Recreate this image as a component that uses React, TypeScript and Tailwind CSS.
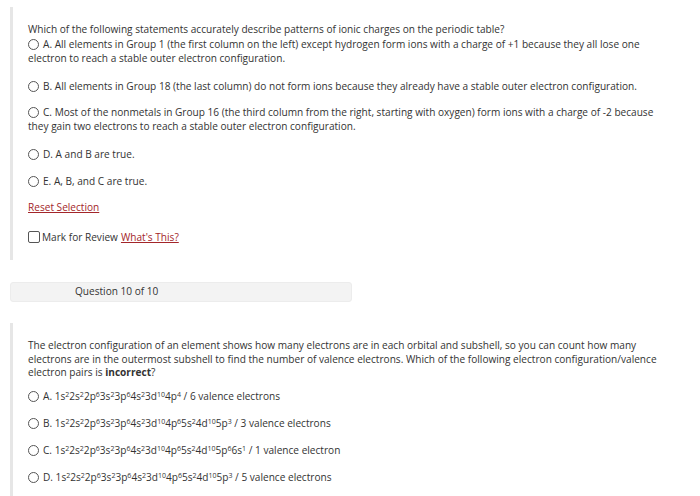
import React from "react";

const Radio = () => (
  <span className="inline-block w-[11px] h-[11px] rounded-full border border-[#555] mr-[4px] align-[-2px] bg-white shrink-0" />
);

const Opt = ({ children, className = "" }: { children: React.ReactNode; className?: string }) => (
  <div className={"leading-[14px] " + className}>
    <Radio />
    {children}
  </div>
);

const S = ({ c }: { c: string }) => <sup className="text-[7px] leading-none relative top-[-3px]">{c}</sup>;

const Config = ({ parts }: { parts: [string, string][] }) => (
  <>
    {parts.map(([b, s], i) => (
      <React.Fragment key={i}>
        {b}
        <S c={s} />
      </React.Fragment>
    ))}
  </>
);

const base: [string, string][] = [
  ["1s", "2"],
  ["2s", "2"],
  ["2p", "6"],
  ["3s", "2"],
  ["3p", "6"],
  ["4s", "2"],
  ["3d", "10"],
];

export default function App() {
  return (
    <div
      className="w-[700px] h-[496px] bg-white overflow-hidden pl-[10px] text-[#333] text-[10.1px]"
      style={{ fontFamily: '"Open Sans", "Liberation Sans", sans-serif' }}
    >
      <div className="mt-[7px] h-[253px] border-l-[3px] border-[#e6e6e6] pl-[15px] pt-[15px]">
        <div className="leading-[14px] w-[630px]">
          Which of the following statements accurately describe patterns of ionic charges on the periodic table?
        </div>
        <Opt className="w-[630px] mt-[1px]">
          A. All elements in Group 1 (the first column on the left) except hydrogen form ions with a charge of +1 because they all lose one electron to reach a stable outer electron configuration.
        </Opt>
        <Opt className="mt-[14px]">
          B. All elements in Group 18 (the last column) do not form ions because they already have a stable outer electron configuration.
        </Opt>
        <Opt className="mt-[12px] w-[640px]">
          C. Most of the nonmetals in Group 16 (the third column from the right, starting with oxygen) form ions with a charge of -2 because they gain two electrons to reach a stable outer electron configuration.
        </Opt>
        <Opt className="mt-[14px]">D. A and B are true.</Opt>
        <Opt className="mt-[13px]">E. A, B, and C are true.</Opt>
        <div className="mt-[12px] leading-[14px]">
          <span className="text-[#a3262a] underline">Reset Selection</span>
        </div>
        <div className="mt-[16px] leading-[14px] flex items-center">
          <span className="inline-block w-[12px] h-[12px] rounded-[2px] border border-[#555] mr-[2px]" />
          <span>Mark for Review</span>
          <span className="text-[#a3262a] underline ml-[3px]">What's This?</span>
        </div>
      </div>

      <div className="mt-[22px] w-[342px] h-[20px] bg-[#f3f3f3] border border-[#ececec] rounded-[3px] flex items-center pl-[64px]">
        Question 10 of 10
      </div>

      <div className="mt-[21px] border-l-[3px] border-[#e6e6e6] pl-[15px] pt-[16px] h-[200px]">
        <div className="leading-[13.5px] w-[640px]">
          The electron configuration of an element shows how many electrons are in each orbital and subshell, so you can count how many electrons are in the outermost subshell to find the number of valence electrons. Which of the following electron configuration/valence electron pairs is <b className="font-bold">incorrect</b>?
        </div>
        <Opt className="mt-[9px]">
          A. <Config parts={[...base, ["4p", "4"]]} /> / 6 valence electrons
        </Opt>
        <Opt className="mt-[13px]">
          B. <Config parts={[...base, ["4p", "6"], ["5s", "2"], ["4d", "10"], ["5p", "3"]]} /> / 3 valence electrons
        </Opt>
        <Opt className="mt-[13px]">
          C. <Config parts={[...base, ["4p", "6"], ["5s", "2"], ["4d", "10"], ["5p", "6"], ["6s", "1"]]} /> / 1 valence electron
        </Opt>
        <Opt className="mt-[13px]">
          D. <Config parts={[...base, ["4p", "6"], ["5s", "2"], ["4d", "10"], ["5p", "3"]]} /> / 5 valence electrons
        </Opt>
      </div>
    </div>
  );
}
